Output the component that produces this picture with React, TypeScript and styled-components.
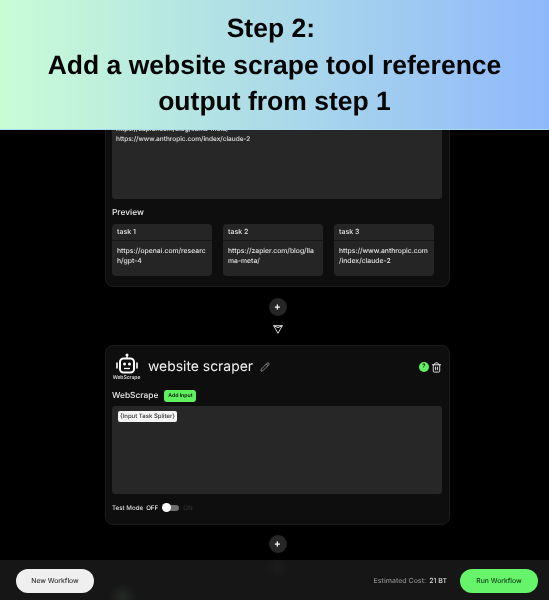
import { FC } from "react";
import styled, { createGlobalStyle } from "styled-components";
import { Pencil, Trash2 } from "lucide-react";

const GlobalStyle = createGlobalStyle`
  html, body {
    margin: 0;
    background: #000;
    font-family: Inter, "Liberation Sans", sans-serif;
    text-rendering: geometricPrecision;
  }
`;

const Page = styled.div`
  width: 549px;
  height: 600px;
  display: flex;
  flex-direction: column;
  overflow: hidden;
  will-change: transform;
  color: #fff;
`;

const Banner = styled.header`
  flex: none;
  position: relative;
  z-index: 1;
  height: 130px;
  box-sizing: border-box;
  border-bottom: 1px solid #a8dcec;
  padding-top: 10px;
  background: linear-gradient(90deg, #c9fdd6 0%, #8fb8fb 100%);
  color: #050505;
  font: 700 26.5px/36.5px "Liberation Sans", Arial, sans-serif;
  text-align: center;
`;

const Canvas = styled.main`
  flex: 1;
  min-height: 0;
  overflow: hidden;
  display: flex;
  flex-direction: column;
  align-items: center;
`;

const Card = styled.section<{ $clipped?: boolean }>`
  flex: none;
  width: 345px;
  box-sizing: border-box;
  margin-left: 6px;
  padding: 7px 6px;
  border: 1px solid #1c1c1c;
  border-radius: 8px;
  background: #0e0e0e;
  ${(p) => (p.$clipped ? "margin-top: -28px; height: 185px;" : "height: 180px;")}
`;

const TextArea = styled.div<{ $height: number; $padTop?: number }>`
  width: 330px;
  height: ${(p) => p.$height}px;
  box-sizing: border-box;
  padding: ${(p) => p.$padTop ?? 0}px 4px 0;
  border-radius: 3px;
  background: #272727;
  font-size: 6.5px;
  font-weight: 500;
  line-height: 10px;
  color: #e2e2e2;
`;

const Url = styled.div``;

const PreviewTitle = styled.div`
  margin: 8px 0 5px;
  font-size: 8.4px;
  font-weight: 500;
  line-height: 12px;
  color: #e8e8e8;
`;

const TaskRow = styled.div`
  display: flex;
  gap: 11px;
`;

const TaskCard = styled.div`
  width: 100px;
  height: 52px;
  border-radius: 4px;
  background: #252525;
  overflow: hidden;
`;

const TaskHead = styled.div`
  height: 17px;
  box-sizing: border-box;
  padding-left: 5px;
  border-bottom: 1px solid #171717;
  font-size: 7px;
  font-weight: 500;
  line-height: 16px;
  color: #e6e6e6;
`;

const TaskBody = styled.div`
  padding: 5px 4px 0 5px;
  font-size: 6.8px;
  font-weight: 500;
  line-height: 10.4px;
  color: #e2e2e2;
  word-break: break-all;
`;

const Connector = styled.div<{ $top: number }>`
  flex: none;
  display: flex;
  flex-direction: column;
  align-items: center;
  margin-top: ${(p) => p.$top}px;
`;

const PlusButton = styled.div`
  width: 18px;
  height: 18px;
  margin-left: 6px;
  border-radius: 50%;
  background: #262626;
  color: #f2f2f2;
  font-size: 10px;
  font-weight: 700;
  line-height: 18px;
  text-align: center;
`;

const ArrowIcon = styled.svg`
  display: block;
  margin: 9px 0 11px 6px;
`;

const CardHead = styled.div`
  display: flex;
  align-items: center;
  height: 33px;
  box-sizing: border-box;
  padding-bottom: 5px;
`;

const ToolBadge = styled.div`
  width: 29px;
  display: flex;
  flex-direction: column;
  align-items: center;
  font-size: 5px;
  font-weight: 500;
  line-height: 7px;
  color: #eee;
`;

const ToolTitle = styled.div`
  margin-left: 7px;
  font-size: 13.9px;
  color: #f2f2f2;
`;

const EditIcon = styled(Pencil)`
  margin-left: 7px;
  color: #999;
`;

const HeadActions = styled.div`
  margin-left: auto;
  margin-right: 1px;
  display: flex;
  align-items: center;
  gap: 2px;
`;

const HelpDot = styled.div`
  width: 10px;
  height: 10px;
  border-radius: 50%;
  background: #62f062;
  color: #0a0a0a;
  font-size: 6px;
  font-weight: 600;
  line-height: 10px;
  text-align: center;
`;

const InputRow = styled.div`
  display: flex;
  align-items: center;
  gap: 6px;
  margin: 2px 0;
  height: 16px;
`;

const InputLabel = styled.div`
  font-size: 8.4px;
  font-weight: 500;
  color: #e8e8e8;
`;

const AddInput = styled.div`
  width: 32px;
  height: 12px;
  border-radius: 3px;
  background: #5ff05f;
  color: #0b0b0b;
  font-size: 5.2px;
  font-weight: 600;
  line-height: 12px;
  text-align: center;
`;

const Chip = styled.span`
  display: inline-block;
  margin: 5px 2px;
  padding: 0 2px;
  border-radius: 2px;
  background: #f5f5f5;
  color: #333;
  font-size: 6px;
  font-weight: 500;
  line-height: 11px;
`;

const ModeRow = styled.div`
  display: flex;
  align-items: center;
  margin-top: 8px;
  height: 12px;
  font-size: 6.2px;
  font-weight: 500;
  color: #ddd;
`;

const ModeState = styled.span<{ $dim?: boolean }>`
  margin-left: ${(p) => (p.$dim ? 4 : 3)}px;
  color: ${(p) => (p.$dim ? "#333" : "#eee")};
`;

const Toggle = styled.div`
  position: relative;
  width: 16px;
  height: 6px;
  margin-left: 5px;
  border-radius: 3px;
  background: #6e6e6e;
`;

const Knob = styled.div`
  position: absolute;
  left: -1px;
  top: -2px;
  width: 9px;
  height: 9px;
  border-radius: 50%;
  background: #fff;
`;

const Footer = styled.footer`
  flex: none;
  height: 40px;
  box-sizing: border-box;
  display: flex;
  align-items: center;
  padding: 1px 11px 0 16px;
  background:
    radial-gradient(circle at 123px 37px, rgba(120, 160, 135, 0.14), transparent 14px),
    radial-gradient(circle at 277px 7px, rgba(70, 70, 70, 0.12), transparent 12px),
    #161616;
`;

const FooterButton = styled.div<{ $primary?: boolean }>`
  width: 78px;
  height: 24px;
  border-radius: 12px;
  background: ${(p) => (p.$primary ? "#66f56a" : "#efefef")};
  color: ${(p) => (p.$primary ? "#14401a" : "#333")};
  font-size: 6.8px;
  font-weight: 500;
  line-height: 24px;
  text-align: center;
`;

const Cost = styled.div`
  margin-left: auto;
  margin-right: 13px;
  font-size: 7px;
  font-weight: 500;
  color: #8d8d8d;
`;

const CostValue = styled.span`
  margin-left: 3px;
  color: #d8d8d8;
`;

const tasks = [
  { name: "task 1", url: "https://openai.com/research/gpt-4" },
  { name: "task 2", url: "https://zapier.com/blog/llama-meta/" },
  { name: "task 3", url: "https://www.anthropic.com\u200b/index/claude-2" },
];

const RobotIcon: FC = () => (
  <svg width="22" height="22" viewBox="0 0 22 22" fill="none" stroke="#fff">
    <circle cx="11" cy="2" r="1.5" fill="#fff" stroke="none" />
    <path d="M11 2v4" strokeWidth="1.4" />
    <rect x="4" y="5.5" width="14" height="14" rx="3.5" strokeWidth="2" />
    <circle cx="8.5" cy="11" r="1.5" fill="#fff" stroke="none" />
    <circle cx="13.5" cy="11" r="1.5" fill="#fff" stroke="none" />
    <path d="M8 15.5h6" strokeWidth="1.3" />
    <path d="M1 10v5M21 10v5" strokeWidth="1.6" strokeLinecap="round" />
  </svg>
);

const App: FC = () => (
  <Page>
    <GlobalStyle />
    <Banner>
      Step 2:&nbsp;
      <br />
      Add a website scrape tool reference
      <br />
      output from step 1
    </Banner>
    <Canvas>
      <Card $clipped>
        <TextArea $height={89} $padTop={4}>
          <Url>https://openai.com/research/gpt-4</Url>
          <Url>https://zapier.com/blog/llama-meta/</Url>
          <Url>https://www.anthropic.com/index/claude-2</Url>
        </TextArea>
        <PreviewTitle>Preview</PreviewTitle>
        <TaskRow>
          {tasks.map((t) => (
            <TaskCard key={t.name}>
              <TaskHead>{t.name}</TaskHead>
              <TaskBody>{t.url}</TaskBody>
            </TaskCard>
          ))}
        </TaskRow>
      </Card>
      <Connector $top={11}>
        <PlusButton>+</PlusButton>
        <ArrowIcon width="10" height="9" viewBox="0 0 10 9" fill="none" stroke="#eee" strokeWidth="0.9">
          <path d="M0.7 0.7h8.6L5 8.3z" strokeLinejoin="round" />
          <path d="M0.7 0.7L5 2.6l4.3-1.9" />
        </ArrowIcon>
      </Connector>
      <Card>
        <CardHead>
          <ToolBadge>
            <RobotIcon />
            WebScrape
          </ToolBadge>
          <ToolTitle>website scraper</ToolTitle>
          <EditIcon size={10} />
          <HeadActions>
            <HelpDot>?</HelpDot>
            <Trash2 size={11} color="#eee" />
          </HeadActions>
        </CardHead>
        <InputRow>
          <InputLabel>WebScrape</InputLabel>
          <AddInput>Add Input</AddInput>
        </InputRow>
        <TextArea $height={88}>
          <Chip>{"{Input Task Spliter}"}</Chip>
        </TextArea>
        <ModeRow>
          Test Mode
          <ModeState>OFF</ModeState>
          <Toggle>
            <Knob />
          </Toggle>
          <ModeState $dim>ON</ModeState>
        </ModeRow>
      </Card>
      <Connector $top={10}>
        <PlusButton>+</PlusButton>
      </Connector>
    </Canvas>
    <Footer>
      <FooterButton>New Workflow</FooterButton>
      <Cost>
        Estimated Cost:
        <CostValue>21 BT</CostValue>
      </Cost>
      <FooterButton $primary>Run Workflow</FooterButton>
    </Footer>
  </Page>
);

export default App;
